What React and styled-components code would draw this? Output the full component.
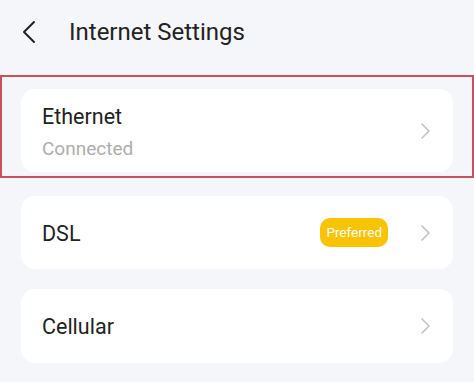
import React from 'react'
import styled, { createGlobalStyle } from 'styled-components'

const Global = createGlobalStyle`
  html, body {
    margin: 0;
    padding: 0;
    background: #f5f6f9;
  }
  body {
    font-family: Roboto, "Liberation Sans", sans-serif;
    color: #1f1f1f;
  }
`;

const Page = styled.div`
  width: 474px;
  height: 382px;
  overflow: hidden;
  background: #f5f6f9;
`;

const Header = styled.div`
  height: 64px;
  display: flex;
  align-items: center;
  padding: 0 0 0 20px;
`;

const Back = styled.button`
  border: none;
  background: none;
  padding: 0;
  width: 22px;
  height: 24px;
  display: flex;
  align-items: center;
  justify-content: flex-start;
  margin-right: 27px;
  cursor: pointer;
`;

const Title = styled.h1`
  margin: 0;
  font-size: 24px;
  font-weight: 400;
  color: #222;
  line-height: 28px;
`;

const List = styled.div`
  display: flex;
  flex-direction: column;
  padding: 25px 21px 0;
`;

const Slot = styled.div`
  position: relative;
  margin-bottom: ${p => p.$gap}px;
`;

const Highlight = styled.div`
  position: absolute;
  top: -14px;
  bottom: -6px;
  left: -21px;
  right: -21px;
  border: 2px solid #c9515c;
  pointer-events: none;
`;

const Card = styled.div`
  background: #fff;
  border-radius: 14px;
  height: ${p => p.$h}px;
  display: flex;
  align-items: center;
  padding: 0 22px 0 21px;
  box-sizing: border-box;
`;

const Texts = styled.div`
  flex: 1;
  display: flex;
  flex-direction: column;
  gap: 8px;
  padding-top: 2px;
`;

const Name = styled.div`
  font-size: 21.5px;
  line-height: 26px;
  color: #222;
`;

const Status = styled.div`
  font-size: 19px;
  line-height: 22px;
  color: #adadad;
`;

const Badge = styled.span`
  background: #f8c300;
  color: #fff;
  font-size: 13.5px;
  line-height: 17px;
  border-radius: 10px;
  padding: 6px 6px;
  margin-right: 31px;
`;

const Chevron = ({ color = '#c2c2c2' }) => (
  <svg width="12" height="18" viewBox="0 0 12 18">
    <path d="M3 2 L10 9 L3 16" fill="none" stroke={color} strokeWidth="1.6" strokeLinecap="round" strokeLinejoin="round" />
  </svg>
);

const BackIcon = () => (
  <svg width="18" height="24" viewBox="0 0 18 24">
    <path d="M14 2 L4 12 L14 22" fill="none" stroke="#222" strokeWidth="2" strokeLinecap="round" strokeLinejoin="round" />
  </svg>
);

const items = [
  { name: 'Ethernet', status: 'Connected', h: 83, gap: 24, active: true },
  { name: 'DSL', badge: 'Preferred', h: 73, gap: 20 },
  { name: 'Cellular', h: 74, gap: 0 },
];

const App = () => {
  return (
    <Page>
      <Global />
      <Header>
        <Back aria-label="Back"><BackIcon /></Back>
        <Title>Internet Settings</Title>
      </Header>
      <List>
        {items.map(item => (
          <Slot key={item.name} $gap={item.gap}>
            <Card $h={item.h}>
              <Texts>
                <Name>{item.name}</Name>
                {item.status && <Status>{item.status}</Status>}
              </Texts>
              {item.badge && <Badge>{item.badge}</Badge>}
              <Chevron />
            </Card>
            {item.active && <Highlight />}
          </Slot>
        ))}
      </List>
    </Page>
  )
}

export default App
